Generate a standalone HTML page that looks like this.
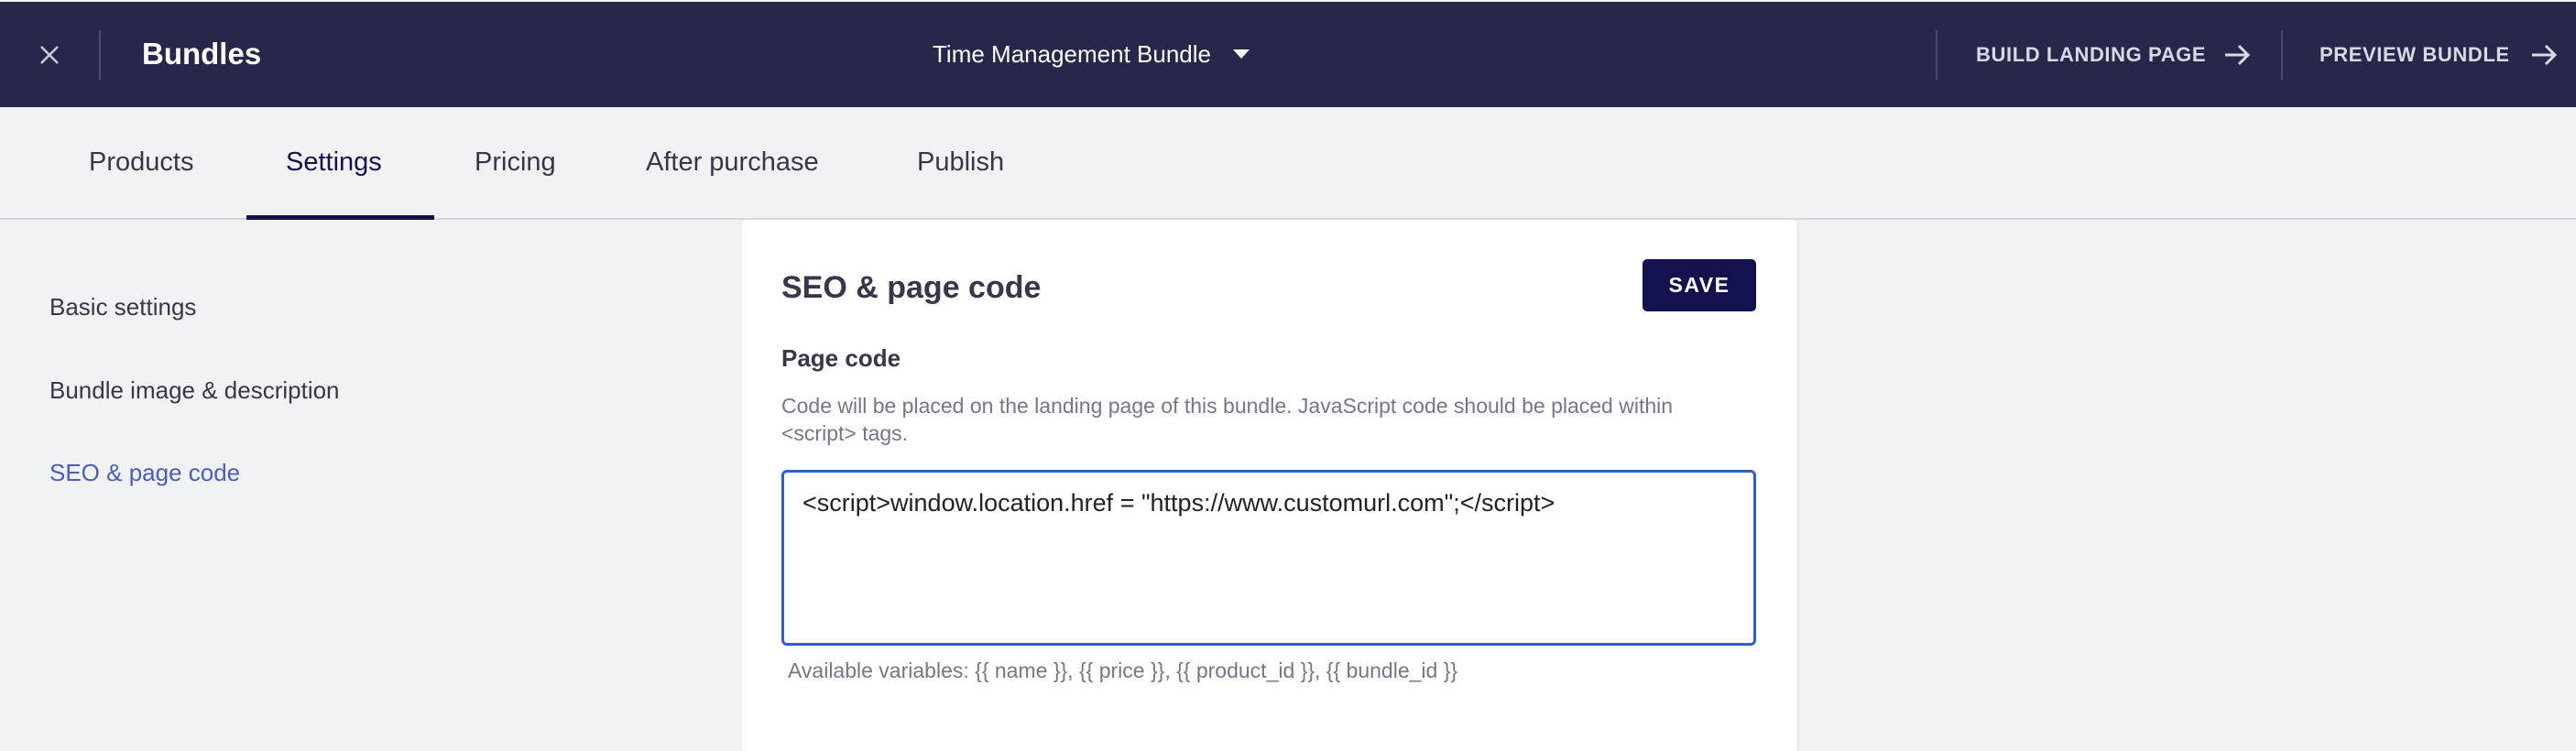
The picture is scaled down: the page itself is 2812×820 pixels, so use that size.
<!DOCTYPE html>
<html><head><meta charset="utf-8"><style>
*{margin:0;padding:0;box-sizing:border-box}
body{width:2812px;height:808px;background:#f1f2f4;font-family:"Liberation Sans",sans-serif;position:relative;overflow:hidden}
.a{position:absolute;white-space:nowrap}
.hdr{position:absolute;left:0;top:2px;width:2812px;height:115px;background:#26274a}
.vd{position:absolute;width:2px;background:#4a4b6a;top:33px;height:54px}
.tab{position:absolute;top:160px;font-size:29px;color:#35374a;line-height:34px}
.up{color:#d8d9e3;font-size:22px;font-weight:bold;letter-spacing:0.6px;top:47px}
</style></head><body>
<div class="hdr"></div>
<svg class="a" style="left:42px;top:48px" width="24" height="24" viewBox="0 0 24 24"><path d="M3 3L21 21M21 3L3 21" stroke="#c9cad6" stroke-width="2.5" fill="none"/></svg>
<div class="vd" style="left:108px"></div>
<div class="a" style="left:155px;top:40px;font-size:33px;font-weight:bold;color:#fff">Bundles</div>
<div class="a" style="left:1018px;top:44px;font-size:26px;color:#fff">Time Management Bundle</div>
<svg class="a" style="left:1346px;top:54px" width="18" height="12"><path d="M0 0H18L9 10Z" fill="#fff"/></svg>
<div class="vd" style="left:2113px"></div>
<div class="a up" style="left:2157px">BUILD LANDING PAGE</div>
<svg class="a" style="left:2427px;top:47px" width="30" height="26" viewBox="0 0 30 26"><path d="M2 13H27M17 3L27 13L17 23" stroke="#d8d9e3" stroke-width="3" fill="none"/></svg>
<div class="vd" style="left:2490px"></div>
<div class="a up" style="left:2532px">PREVIEW BUNDLE</div>
<svg class="a" style="left:2762px;top:47px" width="30" height="26" viewBox="0 0 30 26"><path d="M2 13H27M17 3L27 13L17 23" stroke="#d8d9e3" stroke-width="3" fill="none"/></svg>

<div class="a tab" style="left:97px">Products</div>
<div class="a tab" style="left:312px;color:#14114f">Settings</div>
<div class="a tab" style="left:518px">Pricing</div>
<div class="a tab" style="left:705px">After purchase</div>
<div class="a tab" style="left:1001px">Publish</div>
<div class="a" style="left:0;top:238px;width:2812px;height:2px;background:#d3d4db"></div>
<div class="a" style="left:269px;top:235px;width:205px;height:5px;background:#14114f"></div>

<div class="a" style="left:54px;top:320px;font-size:26px;color:#35374a">Basic settings</div>
<div class="a" style="left:54px;top:411px;font-size:26px;color:#35374a">Bundle image &amp; description</div>
<div class="a" style="left:54px;top:501px;font-size:26px;color:#4a5cc0">SEO &amp; page code</div>

<div class="a" style="left:810px;top:240px;width:1152px;height:580px;background:#fff;border-radius:6px 6px 0 0;box-shadow:1px 0 2px #e0e1e6"></div>
<div class="a" style="left:853px;top:295px;font-size:34px;font-weight:bold;color:#35374a">SEO &amp; page code</div>
<div class="a" style="left:1793px;top:283px;width:124px;height:57px;background:#14114f;border-radius:5px;color:#fff;font-size:23px;font-weight:bold;letter-spacing:1.5px;text-align:center;line-height:57px">SAVE</div>
<div class="a" style="left:853px;top:376px;font-size:26px;font-weight:bold;color:#35374a">Page code</div>
<div class="a" style="left:853px;top:428px;font-size:23px;color:#74768a;line-height:30px">Code will be placed on the landing page of this bundle. JavaScript code should be placed within<br>&lt;script&gt; tags.</div>
<div class="a" style="left:853px;top:513px;width:1064px;height:192px;border:3px solid #2f5fcb;border-radius:6px"></div>
<div class="a" style="left:876px;top:534px;font-size:27px;color:#222">&lt;script&gt;window.location.href = "https://www.customurl.com";&lt;/script&gt;</div>
<div class="a" style="left:860px;top:719px;font-size:23px;color:#74768a">Available variables: {{ name }}, {{ price }}, {{ product_id }}, {{ bundle_id }}</div>
</body></html>
